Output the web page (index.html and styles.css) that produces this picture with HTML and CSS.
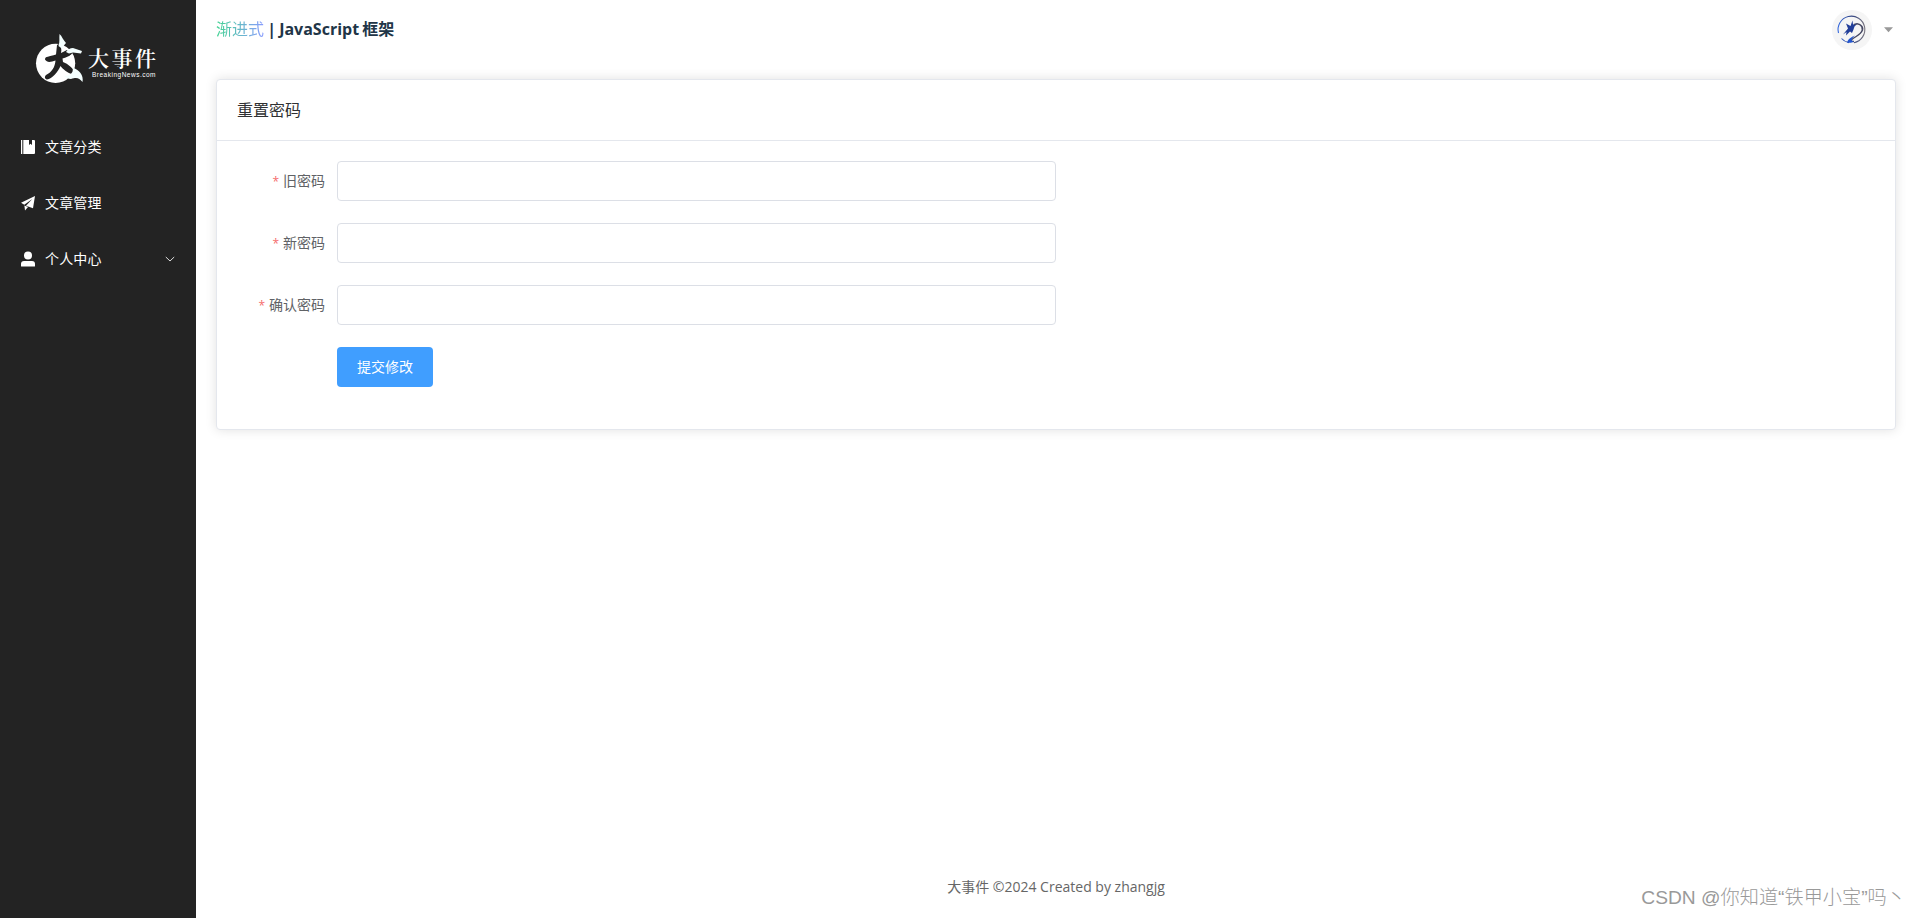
FILE: index.html
```html
<!DOCTYPE html>
<html lang="zh-CN">
<head>
<meta charset="utf-8">
<title>大事件</title>
<link rel="stylesheet" href="styles.css">
</head>
<body>
<div class="layout">
  <aside class="sidebar">
    <div class="logo">
      <svg class="logo-mark" viewBox="0 0 60 60" width="60" height="60">
        <circle cx="25.600" cy="35.300" r="19.600" fill="#fff"/>
        <path d="M28.500 16C31 18 32 21 31 25L37 22L43 24C41 28 37 29 32.500 30.500L33 34C38 36 43 40 46 45L42 46C37 45 33 41 30.500 38C28 44 22 51 17 51.500C15 51 14 49 16 47C22 44 25 39 25.500 32.500C21 34 17 35 15 31.500C15 28 19 29 26 26.500L27 17Z" fill="#232323"/>
        <path d="M29.500 6C32 8 33 12 36 15C34 17 33 19 32.500 21L28.500 18C30 14 29 10 29.500 6ZM36 24C38 21 40 20 43 20L52 23L51 25.500L43 24.500L39 25.500Z" fill="#f4ffff"/>
        <path d="M36 30.500L41 27L44.500 33L43.500 38.500Z" fill="#fff"/>
        <path d="M42.500 39.500C49 42 54 47 52.500 54C49 50 47 49 41 51C38 51 36 49.500 34 48C40 48 44 45 42.500 39.500Z" fill="#f4ffff"/>
      </svg>
      <div class="logo-words">
        <div class="logo-name">大事件</div>
        <div class="logo-site">BreakingNews.com</div>
      </div>
    </div>
    <nav class="menu">
      <a class="menu-item">
        <svg class="menu-icon" viewBox="0 0 14 14"><path d="M0 0h1.300v14H0zM2.300 0H4v14H2.300zM4 0h4v5l1.500-1.300L11 5V0h2a1 1 0 0 1 1 1v12a1 1 0 0 1-1 1H4z"/></svg>
        <span>文章分类</span>
      </a>
      <a class="menu-item">
        <svg class="menu-icon" viewBox="0 0 14 14"><path d="M14 0L0 6.800L3.300 8.700L11.300 3.100L5 9.800L12 12.200ZM3.400 9.600L7 11.100L4 14.600Z"/></svg>
        <span>文章管理</span>
      </a>
      <a class="menu-item">
        <svg class="menu-icon" viewBox="0 0 14 14"><circle cx="7" cy="3.600" r="4"/><path d="M0 14v-2a3 3 0 0 1 3-3h8a3 3 0 0 1 3 3v2a.6.6 0 0 1-.6.6H.6A.6.6 0 0 1 0 14z"/></svg>
        <span>个人中心</span>
        <svg class="menu-arrow" viewBox="0 0 10 6"><path d="M.8 1L5 5L9.200 1"/></svg>
      </a>
    </nav>
  </aside>
  <div class="page">
    <header class="header">
      <div class="slogan"><span class="gradient">渐进式</span> <strong>| JavaScript 框架</strong></div>
      <div class="user">
        <span class="avatar">
          <svg viewBox="0 0 40 40" width="40" height="40">
            <defs><linearGradient id="ring"><stop offset="0" stop-color="#3569df"/><stop offset=".5" stop-color="#334583"/><stop offset="1" stop-color="#77737d"/></linearGradient></defs>
            <path d="M6.500 23A13.400 13.400 0 1 1 22 32.700M9.500 28.500Q12 31.500 17 32.700" fill="none" stroke="url(#ring)" stroke-width="1.100"/>
            <path d="M14 13.500L18.500 16L20.500 10.500L21 14.500L26 13L22.500 16.500L21.500 19.500L20 23L18 21.500L14 25.500L14.500 22L11 24.500L16 18.500Z" fill="#233f9a"/>
            <path d="M22 14.500C27 12.500 31.500 16 30.500 20C29 24.500 24.500 26 21 28.500C18.500 30.500 18.500 31.500 22 31.500" fill="none" stroke="#454762" stroke-width="1.400"/>
            <path d="M24 13.500C29 14 31.500 17 29 21.500C31 15.500 27 15 24 13.500Z" fill="#454762"/>
            <path d="M15 32.500C16.500 28 20 27 23 25.500C19.500 28.500 18 31 22 31.500C20 33 17 33 15 32.500Z" fill="#2356cf"/>
          </svg>
        </span>
        <svg class="caret" viewBox="0 0 10 6"><path d="M0 0h10L5 5.500z"/></svg>
      </div>
    </header>
    <main class="main">
      <section class="card">
        <h1 class="card-title">重置密码</h1>
        <form class="form">
          <div class="field"><label for="old">旧密码</label><input id="old" type="password"></div>
          <div class="field"><label for="new">新密码</label><input id="new" type="password"></div>
          <div class="field"><label for="again">确认密码</label><input id="again" type="password"></div>
          <div class="field actions"><button type="button">提交修改</button></div>
        </form>
      </section>
    </main>
    <footer class="footer">大事件 ©2024 Created by zhangjg</footer>
  </div>
</div>
<div class="watermark">CSDN @你知道“铁甲小宝”吗丶</div>
</body>
</html>
```
FILE: styles.css
```css
* { box-sizing: border-box; }
body {
  margin: 0;
  font-family: "Open Sans", "Noto Sans CJK SC", sans-serif;
  font-size: 14px;
  color: #2c3e50;
  background: #fff;
}
.layout { display: flex; height: 918px; overflow: hidden; }
.sidebar { width: 196px; flex: none; background: #232323; }
.logo { height: 119px; padding: 28px 0 0 30px; display: flex; }
.logo-mark { flex: none; }
.logo-words { padding-top: 15px; margin-left: -2px; color: #fff; white-space: nowrap; }
.logo-name {
  font-family: "Noto Serif CJK SC", "Noto Sans CJK SC", serif;
  font-size: 21px;
  line-height: 28px;
  letter-spacing: 2.500px;
  font-weight: 600;
}
.logo-site {
  font-family: "Liberation Sans", sans-serif;
  font-size: 6.500px;
  line-height: 8px;
  letter-spacing: .5px;
  margin: 0 0 0 4px;
}
.menu-item {
  display: flex;
  align-items: center;
  height: 56px;
  padding: 0 21px 0 21px;
  color: #fff;
}
.menu-item span { padding-bottom: 2px; letter-spacing: .15px; }
.menu-icon { width: 14px; height: 14px; margin-right: 10px; fill: #fff; overflow: visible; }
.menu-arrow { width: 10px; height: 6px; margin-left: auto; fill: none; stroke: #ddd; stroke-width: 1; }
.page { flex: 1; display: flex; flex-direction: column; min-width: 0; }
.header {
  height: 59px;
  padding: 0 20px;
  display: flex;
  align-items: center;
  justify-content: space-between;
}
.slogan { font-size: 16px; line-height: 24px; padding-bottom: 1px; color: #213547; word-spacing: -1px; }
.slogan strong { font-weight: 700; }
.gradient {
  background: linear-gradient(to right, #42d392, #8a9cff);
  -webkit-background-clip: text;
  background-clip: text;
  color: transparent;
}
.user { display: flex; align-items: center; gap: 12px; padding-right: 3px; }
.avatar { width: 40px; height: 40px; border-radius: 50%; background: #f5f5f5; overflow: hidden; }
.avatar svg { display: block; }
.caret { width: 9px; height: 6px; fill: #999; }
.main { flex: 1; padding: 20px; }
.card {
  border: 1px solid #e4e7ed;
  border-radius: 4px;
  background: #fff;
  box-shadow: 0 0 12px rgba(0, 0, 0, .12);
}
.card-title {
  height: 61px;
  margin: 0;
  padding: 0 20px;
  border-bottom: 1px solid #e4e7ed;
  font-size: 16px;
  font-weight: 400;
  line-height: 60px;
  color: #303133;
}
.form { padding: 20px; }
.field { display: flex; width: 819px; margin-bottom: 22px; }
.field label {
  width: 100px;
  padding-right: 12px;
  text-align: right;
  line-height: 39px;
  color: #606266;
}
.field label::before { content: "*"; color: #f56c6c; margin-right: 4px; font-size: 12px; }
.field input {
  flex: 1;
  height: 40px;
  padding: 0 15px;
  border: 1px solid #dcdfe6;
  border-radius: 4px;
  background: #fff;
  outline: none;
}
.actions { padding-left: 100px; }
.actions button {
  width: 96px;
  height: 40px;
  padding: 0 0 2px;
  border: 0;
  border-radius: 4px;
  background: #409eff;
  color: #fff;
  font-family: inherit;
  font-size: 14px;
}
.footer { height: 60px; line-height: 58px; text-align: center; color: #666; }
.watermark {
  position: absolute;
  right: 10px;
  bottom: 6px;
  font-family: "Liberation Sans", "Noto Sans CJK SC", sans-serif;
  font-size: 19.200px;
  font-weight: 300;
  line-height: 28px;
  color: #999;
  white-space: nowrap;
}
```
